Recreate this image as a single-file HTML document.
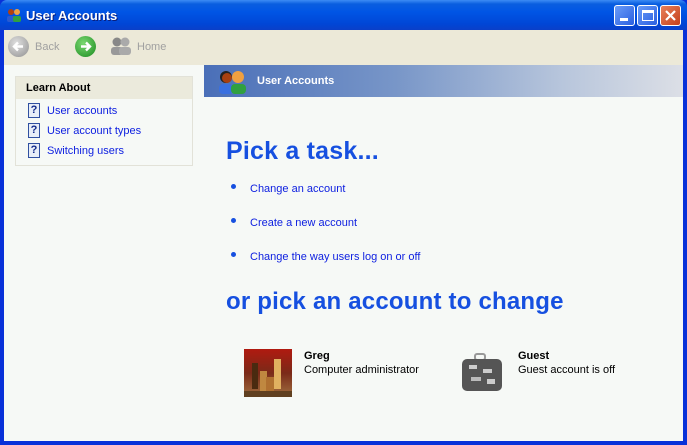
<!DOCTYPE html>
<html><head><style>
*{margin:0;padding:0;box-sizing:border-box}
body{width:687px;height:445px;overflow:hidden;font-family:"Liberation Sans",sans-serif;font-size:11px;background:#0831d9;position:relative}
.title{position:absolute;left:0;top:0;width:687px;height:30px;background:linear-gradient(#3d8cf5 0,#0a5ee0 4px,#0055e5 12px,#0046d6 24px,#0a3fc8 30px);border-radius:7px 7px 0 0}
.title span{position:absolute;left:26px;top:8px;color:#fff;font-weight:bold;font-size:13px;text-shadow:1px 1px #0a1e7a}
.btn{position:absolute;top:5px;width:21px;height:21px;border:1px solid #fff;border-radius:3px;background:linear-gradient(135deg,#6a9cf8,#2a5fe0)}
.btn.x{background:linear-gradient(135deg,#e8805a,#c4401c)}
.frame{position:absolute;left:4px;top:30px;width:679px;height:411px;background:#f6f9f6}
.tool{position:absolute;left:0;top:0;width:679px;height:35px;background:#ece9d8}
.tool span{position:absolute;top:11px;color:#a0a0a0;font-size:11px}
.circ{position:absolute;top:6px;width:21px;height:21px;border-radius:50%}
.panel{position:absolute;left:11px;top:46px;width:178px;height:90px;border:1px solid #e2e2d8;background:#f6f9f6}
.panel .h{height:22px;background:#ebeadc;font-weight:bold;color:#000;padding:5px 0 0 10px}
.panel a{display:block;color:#0c1ee0;height:20px;padding:4px 0 0 31px;position:relative;text-decoration:none}
.q{position:absolute;left:12px;top:2px;width:12px;height:15px;border:1px solid #3050a0;background:#e8eef8;color:#102a8a;font-weight:bold;font-size:11px;text-align:center;line-height:13px}
.band{position:absolute;left:200px;top:35px;width:479px;height:32px;background:linear-gradient(90deg,#4a6fb8 0,#7896c8 40%,#b8c6dc 75%,#dcdfe6 100%)}
.band span{position:absolute;left:53px;top:10px;color:#fff;font-weight:bold;font-size:11px}
h1{position:absolute;left:222px;font-family:"Liberation Sans",sans-serif;font-weight:bold;color:#1650e0;letter-spacing:0.2px}
.task{position:absolute;left:246px;color:#0c1ee0;font-size:11px}
.dot{position:absolute;left:227px;width:5px;height:5px;border-radius:50%;background:#1650e0}
.nm{position:absolute;font-size:11px;color:#000}
</style></head><body>
<div class="title">
<svg style="position:absolute;left:6px;top:8px" width="16" height="15"><circle cx="5" cy="4" r="3" fill="#b04010"/><rect x="1" y="8" width="8" height="6" rx="2" fill="#2a5ad0"/><circle cx="11" cy="4" r="3" fill="#f0a040"/><rect x="7" y="8" width="8" height="6" rx="2" fill="#30a040"/></svg>
<span>User Accounts</span>
<div class="btn" style="left:614px"><div style="position:absolute;left:5px;top:12px;width:8px;height:3px;background:#fff"></div></div>
<div class="btn" style="left:637px"><div style="position:absolute;left:4px;top:4px;width:12px;height:11px;border:1px solid #fff;border-top-width:3px"></div></div>
<div class="btn x" style="left:660px"><svg width="19" height="19"><path d="M5 5L14 14M14 5L5 14" stroke="#fff" stroke-width="2.2"/></svg></div>
</div>
<div class="frame">
<div class="tool">
<div class="circ" style="left:4px;background:radial-gradient(circle at 40% 35%,#e0e0e0,#909090)"><svg width="21" height="21"><path d="M15 10.5H7M10 6.5L6 10.5L10 14.5" stroke="#fff" stroke-width="2.4" fill="none"/></svg></div>
<span style="left:31px">Back</span>
<div class="circ" style="left:71px;background:radial-gradient(circle at 40% 35%,#7ad870,#1a8a20)"><svg width="21" height="21"><path d="M6 10.5H14M11 6.5L15 10.5L11 14.5" stroke="#fff" stroke-width="2.4" fill="none"/></svg></div>
<svg style="position:absolute;left:106px;top:6px" width="22" height="20"><circle cx="7" cy="6" r="4.5" fill="#888"/><rect x="1" y="11" width="12" height="8" rx="3" fill="#999"/><circle cx="15" cy="6" r="4.5" fill="#aaa"/><rect x="9" y="11" width="12" height="8" rx="3" fill="#aaa"/></svg>
<span style="left:133px">Home</span>
</div>
<div class="panel">
<div class="h">Learn About</div>
<a style="margin-top:2px"><span class="q">?</span>User accounts</a>
<a><span class="q">?</span>User account types</a>
<a><span class="q">?</span>Switching users</a>
</div>
<div class="band">
<svg style="position:absolute;left:13px;top:3px" width="30" height="27"><circle cx="9" cy="9" r="6" fill="#222"/><circle cx="10" cy="10" r="5" fill="#a84010"/><rect x="2" y="16" width="14" height="10" rx="4" fill="#3a70e0"/><circle cx="21" cy="9" r="6" fill="#f0a040"/><rect x="14" y="16" width="15" height="10" rx="4" fill="#30a040"/></svg>
<span>User Accounts</span>
</div>
<h1 style="top:107px;font-size:25px">Pick a task...</h1>
<div class="dot" style="top:154px"></div><div class="task" style="top:153px">Change an account</div>
<div class="dot" style="top:188px"></div><div class="task" style="top:187px">Create a new account</div>
<div class="dot" style="top:222px"></div><div class="task" style="top:221px">Change the way users log on or off</div>
<h1 style="top:258px;font-size:24px">or pick an account to change</h1>
<div style="position:absolute;left:240px;top:319px;width:48px;height:48px;background:linear-gradient(#b01a10,#7a2a18 50%,#a07040)">
<svg width="48" height="48"><rect x="30" y="10" width="7" height="30" fill="#e0b060"/><rect x="8" y="14" width="6" height="26" fill="#4a2a10"/><rect x="16" y="22" width="7" height="20" fill="#c08840"/><rect x="22" y="28" width="8" height="16" fill="#b07030"/><rect x="0" y="42" width="48" height="6" fill="#604020"/></svg></div>
<div class="nm" style="left:300px;top:320px;font-weight:bold">Greg</div>
<div class="nm" style="left:300px;top:334px">Computer administrator</div>
<svg style="position:absolute;left:457px;top:323px" width="44" height="40"><rect x="14" y="1" width="10" height="6" rx="2" fill="none" stroke="#999" stroke-width="2"/><rect x="1" y="6" width="40" height="32" rx="5" fill="#555"/><rect x="8" y="12" width="8" height="4" fill="#ccc"/><rect x="22" y="16" width="9" height="4" fill="#ccc"/><rect x="10" y="24" width="10" height="4" fill="#bbb"/><rect x="26" y="26" width="8" height="5" fill="#ccc"/></svg>
<div class="nm" style="left:514px;top:320px;font-weight:bold">Guest</div>
<div class="nm" style="left:514px;top:334px">Guest account is off</div>
</div>
</body></html>
